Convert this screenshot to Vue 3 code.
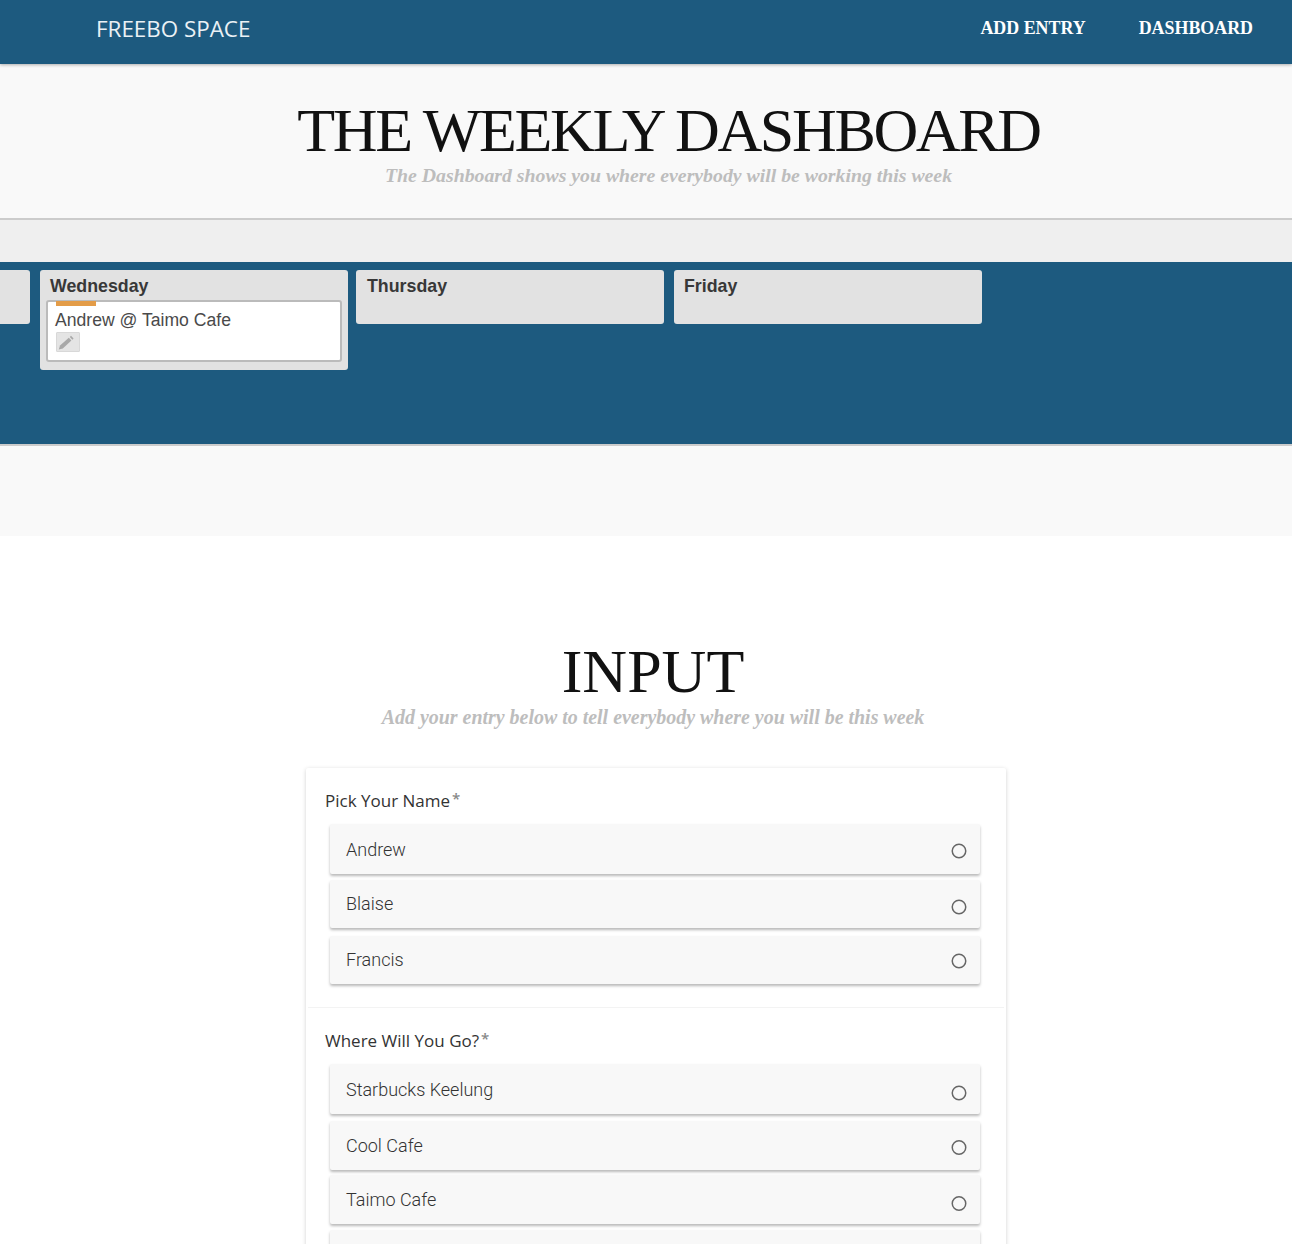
<script setup>
const days = [
  { name: 'Tuesday', cls: 'first' },
  { name: 'Wednesday', cls: 'wed', entries: [{ text: 'Andrew @ Taimo Cafe' }] },
  { name: 'Thursday', cls: 'thu' },
  { name: 'Friday', cls: 'fri' },
]
const sections = [
  {
    title: 'Pick Your Name',
    options: [
      { label: 'Andrew', h: 50, gap: 6, t: 0, r: 2 },
      { label: 'Blaise', h: 48, gap: 8, t: -1, r: 3 },
      { label: 'Francis', h: 48, gap: 8, t: -1, r: 1 },
    ],
  },
  {
    title: 'Where Will You Go?',
    options: [
      { label: 'Starbucks Keelung', h: 50, gap: 7, t: 0, r: 4 },
      { label: 'Cool Cafe', h: 49, gap: 5, t: 0, r: 1.5 },
      { label: 'Taimo Cafe', h: 49, gap: 6, t: 0, r: 3.5 },
      { label: '', h: 50, gap: 6, t: 0, r: 2 },
    ],
  },
]
const optStyle = (o) => ({ height: o.h + 'px', marginBottom: o.gap + 'px' })
const shift = (n) => ({ transform: `translateY(${n}px)` })
</script>

<template>
  <div class="page">
    <header class="topbar">
      <div class="logo">FREEBO SPACE</div>
      <nav class="nav">
        <a>ADD ENTRY</a>
        <a>DASHBOARD</a>
      </nav>
    </header>

    <section class="hero">
      <h1>THE WEEKLY DASHBOARD</h1>
      <p>The Dashboard shows you where everybody will be working this week</p>
    </section>

    <div class="band"></div>

    <section class="board">
      <div class="columns">
        <div v-for="day in days" :key="day.name" class="column" :class="day.cls">
          <h3 v-if="day.cls !== 'first'">{{ day.name }}</h3>
          <div v-for="entry in day.entries" :key="entry.text" class="entry">
            <span class="label-bar"></span>
            <div class="entry-text">{{ entry.text }}</div>
            <button class="edit" aria-label="Edit">
              <svg viewBox="0 0 24 20" width="24" height="20">
                <path d="M2.8 17.6 L4 13.6 L12.8 5.8 L15.4 8.6 L6.8 16.4 Z" fill="#a8a8a8" />
                <path d="M13.8 4.9 L15 3.8 L17.6 6.6 L16.4 7.7 Z" fill="#a8a8a8" />
              </svg>
            </button>
          </div>
        </div>
      </div>
    </section>

    <div class="spacer"></div>

    <section class="input-head">
      <h2>INPUT</h2>
      <p>Add your entry below to tell everybody where you will be this week</p>
    </section>

    <div class="form-wrap">
      <form class="form">
        <div v-for="section in sections" :key="section.title" class="group">
          <div class="question">{{ section.title }}<span class="req">*</span></div>
          <div class="options">
            <div v-for="opt in section.options" :key="opt.label" class="option" :style="optStyle(opt)">
              <span class="opt-text" :style="shift(opt.t)">{{ opt.label }}</span>
              <svg class="radio" :style="shift(opt.r)" viewBox="0 0 16 16" width="16" height="16">
                <circle cx="8" cy="8" r="6.75" fill="none" stroke="#666" stroke-width="1.5" />
              </svg>
            </div>
          </div>
        </div>
      </form>
    </div>
  </div>
</template>

<style>
html, body { margin: 0; background: #fff; }
</style>

<style scoped>
.page {
  height: 1244px;
  overflow: hidden;
  font-family: "Liberation Sans", Arial, sans-serif;
  background: #fff;
}
.topbar {
  height: 64px;
  background: #1d5a7f;
  box-shadow: 0 1px 3px rgba(0, 0, 0, 0.3);
  display: flex;
  justify-content: space-between;
  position: relative;
  padding: 0 39px 0 96px;
}
.logo {
  font-family: "Open Sans", sans-serif;
  font-size: 22.4px;
  line-height: 58px;
  color: #eaf1f5;
}
.nav {
  display: flex;
  gap: 53px;
  font-family: "Liberation Serif", serif;
  font-weight: 700;
  font-size: 17.9px;
  line-height: 56px;
  color: #fff;
}
.hero {
  height: 156px;
  box-sizing: border-box;
  background: #f9f9f9;
  border-bottom: 2px solid #ccc;
  padding: 35px 0 0 45px;
  text-align: center;
}
.hero h1, .input-head h2 {
  margin: 0;
  font-family: "Liberation Serif", serif;
  font-weight: 400;
  color: #111;
  font-size: 62px;
  line-height: 62px;
}
.hero h1 { letter-spacing: -2.35px; }
.hero p, .input-head p {
  margin: 2px 0 0;
  font-family: "Liberation Serif", serif;
  font-style: italic;
  font-weight: 700;
  color: #bdbdbd;
  font-size: 19.8px;
  line-height: 24px;
}
.input-head p { margin-top: 3px; font-size: 19.95px; }
.band { height: 42px; background: #efefef; }
.board {
  height: 182px;
  box-sizing: border-box;
  background: #1d5a7f;
  padding-top: 8px;
  overflow: hidden;
}
.columns { display: flex; align-items: flex-start; margin-left: -278px; }
.column {
  flex: 0 0 308px;
  box-sizing: border-box;
  min-height: 54px;
  background: #e2e2e2;
  border-radius: 3px;
  padding: 0 6px;
  margin-right: 10px;
}
.column.wed { margin-right: 8px; padding-bottom: 8px; }
.column h3 {
  margin: 0;
  padding: 2px 0 0 4px;
  font-size: 17.8px;
  line-height: 28px;
  height: 30px;
  box-sizing: border-box;
  font-weight: 700;
  color: #383838;
}
.column.thu h3 { padding-left: 5px; }
.entry {
  position: relative;
  height: 62px;
  box-sizing: border-box;
  background: #fff;
  border: 2px solid #bbb;
  border-radius: 3px;
  padding: 7px 8px 0 7px;
}
.label-bar {
  position: absolute;
  left: 8px;
  top: -1px;
  width: 40px;
  height: 5px;
  background: #e39c48;
}
.entry-text { font-size: 17.6px; line-height: 22px; color: #4a4a4a; }
.edit {
  display: block;
  width: 24px;
  height: 20px;
  margin: 1px 0 0 1px;
  padding: 0;
  border: 1px solid #d8d8d8;
  background: #e4e4e4;
  box-sizing: border-box;
  border-radius: 1px;
}
.edit svg { display: block; margin: -1px; }
.spacer {
  height: 90px;
  background: #f9f9f9;
  border-top: 2px solid #ccc;
}
.input-head {
  padding: 104px 0 0 14px;
  text-align: center;
}
.form-wrap { padding: 39px 0 0 306px; }
.form {
  width: 700px;
  background: #fff;
  box-shadow: 0 1px 4px rgba(0, 0, 0, 0.18);
  border-radius: 2px;
}
.group { margin: 0 2px; padding: 22px 24px 15px 22px; border-bottom: 1px solid #f3f3f3; }
.question {
  margin-left: -5px;
  font-family: "Open Sans", Lato, sans-serif;
  font-size: 17px;
  line-height: 22px;
  color: #333;
}
.req {
  color: #888;
  font-size: 15px;
  font-weight: 600;
  line-height: 0;
  vertical-align: 3px;
  margin-left: 2px;
}
.options { padding-top: 12px; }
.option {
  position: relative;
  width: 650px;
  box-sizing: border-box;
  background: #f8f8f8;
  border-radius: 2px;
  box-shadow: 0 2px 3px rgba(0, 0, 0, 0.28);
  padding: 0 13px 0 16px;
  display: flex;
  align-items: center;
  justify-content: space-between;
}
.opt-text {
  font-family: Roboto, sans-serif;
  font-weight: 300;
  font-size: 18px;
  color: #333;
}
.radio { display: block; }
</style>
